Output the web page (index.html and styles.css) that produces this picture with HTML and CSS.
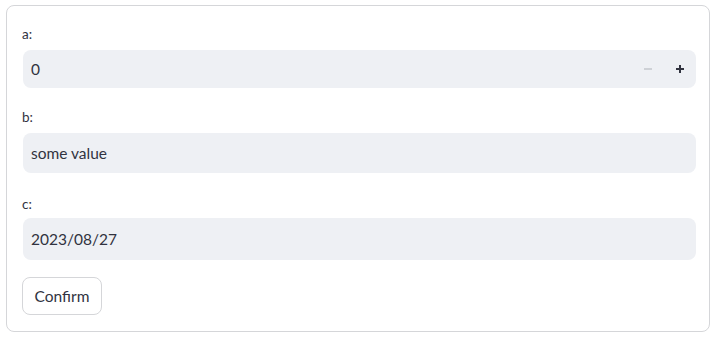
FILE: index.html
```html
<!DOCTYPE html>
<html>
<head>
<meta charset="utf-8">
<link rel="stylesheet" href="styles.css">
</head>
<body>
<form class="form">
  <div class="field field-a">
    <label class="label">a:</label>
    <div class="input input-number">
      <span class="value">0</span>
      <span class="step step-minus"><svg width="10" height="10" viewBox="0 0 10 10"><rect x="1" y="4.25" width="8" height="1.5" fill="currentColor"/></svg></span>
      <span class="step step-plus"><svg width="10" height="10" viewBox="0 0 10 10"><rect x="1" y="4" width="8" height="2" fill="currentColor"/><rect x="4" y="1" width="2" height="8" fill="currentColor"/></svg></span>
    </div>
  </div>
  <div class="field field-b">
    <label class="label">b:</label>
    <div class="input input-text"><span class="value">some value</span></div>
  </div>
  <div class="field field-c">
    <label class="label">c:</label>
    <div class="input input-date"><span class="value">2023/08/27</span></div>
  </div>
  <button type="button" class="btn">Confirm</button>
</form>
</body>
</html>
```

FILE: styles.css
```css
html, body {
  margin: 0;
  padding: 0;
  background: #ffffff;
}
body {
  font-family: Lato, "Liberation Sans", sans-serif;
  color: #31333f;
}
.form {
  box-sizing: border-box;
  margin: 5px 0 0 6px;
  width: 704px;
  height: 327px;
  border: 1px solid #d5d6d9;
  border-radius: 8px;
  padding: 16px 13px 16px 15px;
  display: flex;
  flex-direction: column;
}
.field {
  display: flex;
  flex-direction: column;
}
.label {
  font-size: 13.5px;
  height: 24px;
  line-height: 24px;
  padding-left: 0;
}
.field-a .label { margin-bottom: 4px; }
.field-b { margin-top: 17px; }
.field-b .label { margin-bottom: 4px; }
.field-c { margin-top: 19px; }
.field-c .label { margin-bottom: 2px; }
.input {
  background: #eef0f4;
  border-radius: 8px;
  display: flex;
  align-items: center;
  margin-left: 1px;
  font-size: 15.5px;
}
.value {
  flex: 1;
  padding-left: 8px;
}
.input-number { height: 38px; }
.input-text { height: 40px; }
.input-date { height: 42px; }
.step {
  width: 32px;
  height: 100%;
  display: flex;
  align-items: center;
  justify-content: center;
}
.step-minus { color: #c4c6cc; }
.step-plus { color: #31333f; }
.btn {
  margin-top: 17px;
  align-self: flex-start;
  box-sizing: border-box;
  width: 80px;
  height: 38px;
  background: #ffffff;
  border: 1px solid #d5d6d9;
  border-radius: 8px;
  font-family: inherit;
  font-size: 15.5px;
  color: #31333f;
  padding: 0;
}
```
